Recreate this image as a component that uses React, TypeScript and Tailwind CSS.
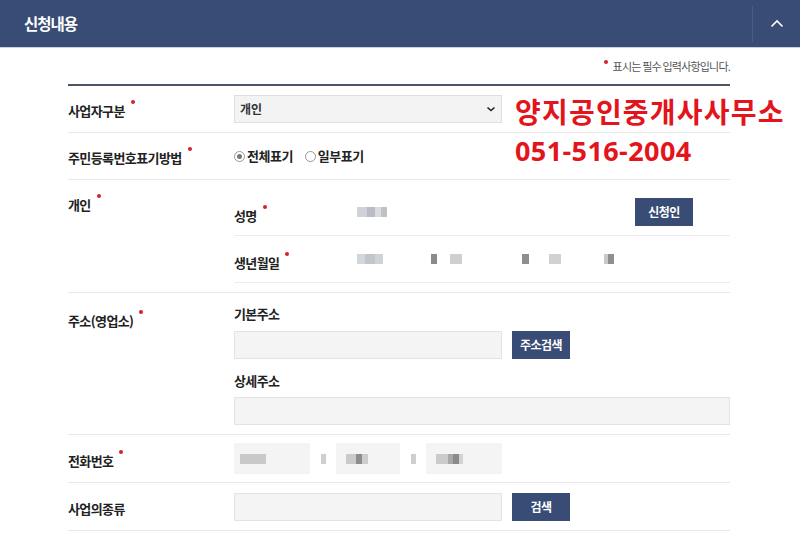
import React from 'react';

const Req = () => (
  <span className="inline-block w-[4px] h-[4px] rounded-full bg-[#d3222a] ml-[6px] -translate-y-[10px] align-middle" />
);

const Label = ({ text, req = true }: { text: string; req?: boolean }) => (
  <span className="text-[13px] font-bold text-[#222] tracking-[-0.6px]">
    {text}
    {req && <Req />}
  </span>
);

const Blur = ({ blocks }: { blocks: { w: number; c: string }[] }) => (
  <div className="flex items-center blur-[0.6px]">
    {blocks.map((b, i) => (
      <div key={i} className="h-[10px]" style={{ width: b.w, backgroundColor: b.c }} />
    ))}
  </div>
);

const NavyBtn = ({ children, w = 'w-[58px]' }: { children: React.ReactNode; w?: string }) => (
  <button className={`${w} h-[28px] bg-[#384c75] text-white text-[12px] font-bold tracking-[-0.5px]`}>
    {children}
  </button>
);

const Input = ({ w }: { w: string }) => (
  <div className={`${w} h-[28px] bg-[#f4f4f4] border border-[#e3e3e3]`} />
);

export default function App() {
  return (
    <div
      className="relative w-[800px] h-[556px] bg-white overflow-hidden"
      style={{ fontFamily: '"Noto Sans CJK KR", "Noto Sans", sans-serif' }}
    >
      {/* Header */}
      <div className="h-[48px] bg-[#384c75] flex items-center border-b border-[#c9d0de]">
        <h2 className="pl-[24px] text-white text-[15.5px] font-bold tracking-[-1px] flex-1">신청내용</h2>
        <div className="w-px h-[36px] bg-[#4a5d86]" />
        <div className="w-[47px] flex justify-center">
          <svg width="14" height="9" viewBox="0 0 14 9" fill="none">
            <polyline points="1.5,7.5 7,2 12.5,7.5" stroke="#fff" strokeWidth="1.6" />
          </svg>
        </div>
      </div>

      <div className="ml-[68px] w-[662px]">
        {/* Notice */}
        <div className="h-[36px] flex justify-end items-start pt-[10px]">
          <span className="text-[11px] text-[#555] tracking-[-0.8px] leading-[16px]">
            <span className="inline-block w-[4px] h-[4px] rounded-full bg-[#d3222a] mr-[5px] -translate-y-[6px] align-middle" />
            표시는 필수 입력사항입니다.
          </span>
        </div>

        <div className="border-t-2 border-[#4a5565]">
          {/* 사업자구분 */}
          <div className="h-[47px] flex items-center border-b border-[#e8e8e8]">
            <div className="w-[166px]">
              <Label text="사업자구분" />
            </div>
            <div className="w-[268px] h-[28px] bg-[#f3f3f3] border border-[#dedede] flex items-center justify-between px-[5px]">
              <span className="text-[12px] font-bold text-[#333]">개인</span>
              <svg width="10" height="6" viewBox="0 0 10 6" fill="none">
                <polyline points="1.5,1.5 5,4.5 8.5,1.5" stroke="#222" strokeWidth="1.6" />
              </svg>
            </div>
          </div>

          {/* 주민등록번호표기방법 */}
          <div className="h-[47px] flex items-center border-b border-[#e8e8e8]">
            <div className="w-[166px]">
              <Label text="주민등록번호표기방법" />
            </div>
            <div className="flex items-center gap-[12px] text-[13px] font-bold text-[#222] tracking-[-0.5px]">
              <label className="flex items-center gap-[2px]">
                <span className="w-[11px] h-[11px] rounded-full border border-[#999] flex items-center justify-center">
                  <span className="w-[5px] h-[5px] rounded-full bg-[#777]" />
                </span>
                전체표기
              </label>
              <label className="flex items-center gap-[2px]">
                <span className="w-[11px] h-[11px] rounded-full border border-[#999]" />
                일부표기
              </label>
            </div>
          </div>

          {/* 개인 */}
          <div className="flex border-b border-[#e8e8e8] pb-[9px]">
            <div className="w-[166px] pt-[11px]">
              <Label text="개인" />
            </div>
            <div className="flex-1">
              <div className="flex items-center pt-[18px] pb-[9px] border-b border-[#ececec]">
                <div className="w-[123px] pt-[4px]">
                  <Label text="성명" />
                </div>
                <div className="flex-1">
                  <Blur blocks={[{ w: 10, c: '#cfd2d8' }, { w: 8, c: '#b9bcc4' }, { w: 6, c: '#dadce0' }, { w: 6, c: '#bfc1c6' }]} />
                </div>
                <div className="mr-[37px]">
                  <NavyBtn>신청인</NavyBtn>
                </div>
              </div>
              <div className="h-[47px] flex items-center border-b border-[#ececec]">
                <div className="w-[123px] pt-[4px]">
                  <Label text="생년월일" />
                </div>
                <div className="flex items-center">
                  <Blur blocks={[{ w: 8, c: '#d3d6db' }, { w: 10, c: '#c1c5cc' }, { w: 8, c: '#d0d2d6' }]} />
                  <div className="w-[48px]" />
                  <Blur blocks={[{ w: 6, c: '#8a8a8a' }]} />
                  <div className="w-[13px]" />
                  <Blur blocks={[{ w: 12, c: '#cfcfcf' }]} />
                  <div className="w-[60px]" />
                  <Blur blocks={[{ w: 7, c: '#8e8e8e' }]} />
                  <div className="w-[20px]" />
                  <Blur blocks={[{ w: 12, c: '#d1d1d1' }]} />
                  <div className="w-[43px]" />
                  <Blur blocks={[{ w: 4, c: '#c9c9c9' }, { w: 6, c: '#8f8f8f' }]} />
                </div>
              </div>
            </div>
          </div>

          {/* 주소 */}
          <div className="flex border-b border-[#e8e8e8] pt-[12px] pb-[9px]">
            <div className="w-[166px] pt-[2px]">
              <Label text="주소(영업소)" />
            </div>
            <div className="flex-1">
              <div className="h-[18px] flex items-center">
                <Label text="기본주소" req={false} />
              </div>
              <div className="flex items-center gap-[10px] mt-[8px]">
                <Input w="w-[268px]" />
                <NavyBtn>주소검색</NavyBtn>
              </div>
              <div className="h-[18px] flex items-center mt-[13px]">
                <Label text="상세주소" req={false} />
              </div>
              <div className="mt-[7px]">
                <Input w="w-full" />
              </div>
            </div>
          </div>

          {/* 전화번호 */}
          <div className="h-[48px] flex items-center border-b border-[#e8e8e8]">
            <div className="w-[166px]">
              <Label text="전화번호" />
            </div>
            <div className="flex items-center">
              <div className="w-[76px] h-[31px] bg-[#f4f4f4] flex items-center pl-[6px]">
                <Blur blocks={[{ w: 26, c: '#c9c9c9' }]} />
              </div>
              <div className="w-[26px] flex justify-center">
                <Blur blocks={[{ w: 5, c: '#cfcfcf' }]} />
              </div>
              <div className="w-[64px] h-[31px] bg-[#f4f4f4] flex items-center pl-[10px]">
                <Blur blocks={[{ w: 10, c: '#cacaca' }, { w: 6, c: '#8d8d8d' }, { w: 6, c: '#cdcdcd' }]} />
              </div>
              <div className="w-[26px] flex justify-center">
                <Blur blocks={[{ w: 5, c: '#cfcfcf' }]} />
              </div>
              <div className="w-[76px] h-[31px] bg-[#f4f4f4] flex items-center pl-[10px]">
                <Blur blocks={[{ w: 12, c: '#cbcbcb' }, { w: 5, c: '#a9a9a9' }, { w: 6, c: '#8b8b8b' }, { w: 4, c: '#d3d3d3' }]} />
              </div>
            </div>
          </div>

          {/* 사업의종류 */}
          <div className="h-[48px] flex items-center border-b border-[#e8e8e8]">
            <div className="w-[166px]">
              <Label text="사업의종류" req={false} />
            </div>
            <div className="flex items-center gap-[10px]">
              <Input w="w-[268px]" />
              <NavyBtn>검색</NavyBtn>
            </div>
          </div>
        </div>
      </div>

      {/* Overlaid red text */}
      <div className="absolute left-[515px] top-[91px] text-[#e3141c] font-bold leading-[40px]">
        <div className="text-[28px] tracking-[1.2px]">양지공인중개사사무소</div>
        <div className="text-[27px] tracking-[0.4px]" style={{ fontFamily: '"Open Sans", "Noto Sans", sans-serif' }}>051-516-2004</div>
      </div>
    </div>
  );
}
